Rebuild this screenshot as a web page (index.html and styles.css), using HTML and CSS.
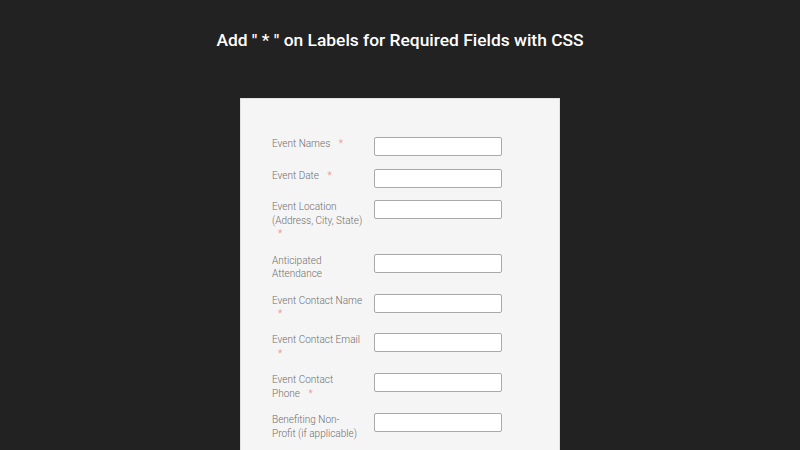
FILE: index.html
```html
<!DOCTYPE html>
<html>
<head>
<meta charset="utf-8">
<link rel="stylesheet" href="styles.css">
</head>
<body>
<h1 class="title">Add " * " on Labels for Required Fields with CSS</h1>
<form class="card">
  <div class="row"><label class="label required">Event Names </label><input class="field" type="text"></div>
  <div class="row"><label class="label required">Event Date </label><input class="field" type="text"></div>
  <div class="row"><label class="label required">Event Location (Address, City, State) </label><input class="field" type="text"></div>
  <div class="row"><label class="label">Anticipated Attendance</label><input class="field" type="text"></div>
  <div class="row"><label class="label required">Event Contact Name </label><input class="field" type="text"></div>
  <div class="row"><label class="label required">Event Contact Email </label><input class="field" type="text"></div>
  <div class="row"><label class="label required">Event Contact Phone </label><input class="field" type="text"></div>
  <div class="row"><label class="label">Benefiting Non-Profit (if applicable)</label><input class="field" type="text"></div>
</form>
</body>
</html>
```

FILE: styles.css
```css
html, body {
  margin: 0;
  padding: 0;
  background: #222222;
  height: 100%;
  overflow: hidden;
}
body {
  font-family: Roboto, "Liberation Sans", sans-serif;
}
.title {
  margin: 0;
  padding-top: 28px;
  font-size: 17.4px;
  line-height: 24px;
  font-weight: 500;
  color: #ffffff;
  text-align: center;
}
.card {
  width: 256px;
  margin: 46px auto 0;
  padding: 38px 31px 20px;
  background: #f5f5f5;
  border: 1px solid #e2e2e2;
}
.row {
  display: flex;
  align-items: flex-start;
  margin-bottom: 12.5px;
}
.label {
  width: 90.5px;
  margin-right: 11.5px;
  font-size: 10px;
  line-height: 13.7px;
  font-weight: 300;
  color: #6f6f6f;
}
.required::after {
  content: "*";
  padding-left: 6px;
  color: #ec8a8a;
}
.field {
  box-sizing: border-box;
  width: 128px;
  height: 19px;
  margin: 0;
  padding: 0 4px;
  background: #ffffff;
  border: 1px solid #a9a9a9;
  border-radius: 2px;
}
```
